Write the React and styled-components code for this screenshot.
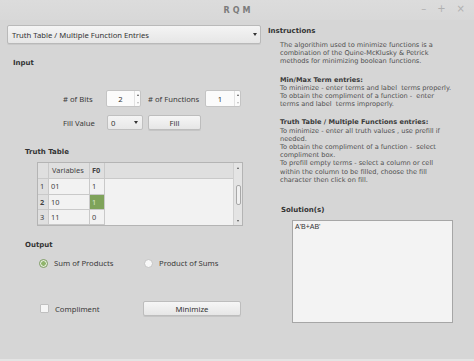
import React from "react";
import styled, { createGlobalStyle } from "styled-components";

const Global = createGlobalStyle`
  html, body { margin: 0; padding: 0; background: #d6d6d6; }
  body { font-family: "Noto Sans", "Open Sans", sans-serif; }
  * { box-sizing: border-box; }
`;

const Window = styled.div`
  width: 474px;
  height: 361px;
  background: #d6d6d6;
  display: flex;
  flex-direction: column;
  border-bottom: 2px solid #e4e4e4;
  overflow: hidden;
`;

const TitleBar = styled.div`
  height: 20px;
  display: grid;
  grid-template-columns: 1fr auto 1fr;
  align-items: center;
  background: linear-gradient(#dcdcdc, #d8d8d8);
`;

const Title = styled.div`
  font-family: "DejaVu Sans", sans-serif;
  font-size: 8px;
  font-weight: bold;
  color: #7c7c7c;
  letter-spacing: 3px;
  padding-left: 3px;
  margin-top: 1px;
`;

const Controls = styled.div`
  display: flex;
  justify-content: flex-end;
  gap: 11px;
  padding-right: 9px;
  color: #b0b0b0;
  font-family: "DejaVu Sans", sans-serif;
  font-size: 10px;
  margin-top: -3px;
`;

const Body = styled.div`
  flex: 1;
  display: flex;
`;

const LeftPane = styled.div`
  width: 263px;
  display: flex;
  flex-direction: column;
  padding: 5px 0 0 7px;
`;

const RightPane = styled.div`
  flex: 1;
  display: flex;
  flex-direction: column;
  padding: 6px 0 0 5px;
`;

const Dropdown = styled.div`
  width: 254px;
  height: 19px;
  border: 1px solid #b9b9b9;
  border-radius: 2px;
  background: linear-gradient(#f4f4f4, #e6e6e6);
  display: flex;
  align-items: center;
  justify-content: space-between;
  padding: 0 3px 0 4px;
  font-size: 7.7px;
  color: #333;
  box-shadow: 0 1px 0 rgba(0,0,0,0.06);
`;

const Caret = styled.span`
  width: 0;
  height: 0;
  border-left: 2.5px solid transparent;
  border-right: 2.5px solid transparent;
  border-top: 3px solid #333;
`;

const SectionLabel = styled.div`
  font-family: "DejaVu Sans", sans-serif;
  font-weight: bold;
  font-size: 7px;
  line-height: 10px;
  color: #333;
  margin-top: ${p => p.$mt}px;
  margin-left: ${p => p.$ml}px;
`;

const FormRow = styled.div`
  display: flex;
  align-items: center;
  margin-top: ${p => p.$mt}px;
  margin-left: 56px;
  height: ${p => p.$h}px;
`;

const FieldLabel = styled.span`
  font-size: 7.7px;
  color: #3a3a3a;
  width: ${p => p.$w}px;
  padding-left: ${p => p.$pl || 0}px;
  flex: none;
`;

const Spin = styled.div`
  width: ${p => p.$w}px;
  height: 17px;
  border: 1px solid #c4c4c4;
  border-radius: 2px;
  background: #fbfbfb;
  display: flex;
  align-items: stretch;
  flex: none;
`;

const SpinValue = styled.div`
  flex: 1;
  display: flex;
  align-items: center;
  justify-content: center;
  font-size: 7.7px;
  color: #333;
`;

const SpinArrows = styled.div`
  width: 6px;
  border-left: 1px solid #e2e2e2;
  display: flex;
  flex-direction: column;
  align-items: center;
  justify-content: space-between;
  padding: 3px 0 2px;
`;

const Tri = styled.span`
  width: 0;
  height: 0;
  border-left: 1.5px solid transparent;
  border-right: 1.5px solid transparent;
  ${p => p.$up ? "border-bottom: 2px solid #555;" : `border-top: 2px solid ${p.$dark ? "#555" : "#bbb"};`}
`;

const Combo = styled.div`
  width: 36px;
  height: 15px;
  border: 1px solid #c0c0c0;
  border-radius: 2px;
  background: linear-gradient(#f4f4f4, #e8e8e8);
  display: flex;
  align-items: center;
  justify-content: space-between;
  padding: 0 4px 0 3px;
  font-size: 7.7px;
  color: #333;
  flex: none;
`;

const Button = styled.div`
  width: ${p => p.$w}px;
  height: ${p => p.$h}px;
  margin-left: ${p => p.$ml}px;
  border: 1px solid #bdbdbd;
  border-radius: 2px;
  background: linear-gradient(#f6f6f6, #e6e6e6);
  display: flex;
  align-items: center;
  justify-content: center;
  font-size: 7.7px;
  color: #333;
  box-shadow: 0 1px 0 rgba(0,0,0,0.08);
  flex: none;
`;

const TableFrame = styled.div`
  margin: 5px 0 0 30px;
  width: 206px;
  height: 64px;
  border: 1px solid #b4b4b4;
  display: flex;
  background: #f1f1f1;
`;

const Grid = styled.div`
  flex: 1;
  display: flex;
  flex-direction: column;
`;

const Row = styled.div`
  display: flex;
  height: ${p => p.$h || 16}px;
  background: ${p => p.$head ? "#dfdfdf" : "#f2f2f2"};
`;

const Cell = styled.div`
  width: ${p => p.$w}px;
  flex: none;
  display: flex;
  align-items: center;
  padding-left: ${p => p.$pl ?? 2}px;
  font-size: 7.4px;
  color: ${p => p.$sel ? "#d9ead0" : "#444"};
  font-weight: ${p => p.$bold ? "bold" : "normal"};
  background: ${p => p.$sel ? "#7fa35a" : p.$gray ? "#dfdfdf" : "transparent"};
  border-right: 1px solid #c9c9c9;
  border-bottom: 1px solid #c9c9c9;
`;

const Filler = styled.div`
  flex: 1;
  border-bottom: ${p => p.$head ? "1px solid #c9c9c9" : "none"};
`;

const ScrollBar = styled.div`
  width: 9px;
  background: #e4e4e4;
  border-left: 1px solid #d0d0d0;
  display: flex;
  flex-direction: column;
  align-items: center;
  justify-content: space-between;
  padding: 4px 0 3px;
`;

const Thumb = styled.div`
  width: 5px;
  height: 20px;
  border: 1px solid #a8a8a8;
  border-radius: 2px;
  background: #f0f0f0;
`;

const RadioRow = styled.div`
  display: flex;
  align-items: center;
  margin: 8px 0 0 32px;
  height: 10px;
`;

const RadioItem = styled.div`
  display: flex;
  align-items: center;
  gap: 6px;
  width: ${p => p.$w}px;
  font-size: 7.7px;
  color: #3a3a3a;
`;

const Radio = styled.span`
  width: 9px;
  height: 9px;
  border-radius: 50%;
  border: 1px solid ${p => p.$on ? "#7d9c62" : "#c4c4c4"};
  background: ${p => p.$on ? "radial-gradient(circle, #8fb46c 0 2px, #e3ecd9 2.5px)" : "#f8f8f8"};
  flex: none;
`;

const CheckRow = styled.div`
  display: flex;
  align-items: center;
  margin: 33px 0 0 33px;
`;

const CheckItem = styled.div`
  display: flex;
  align-items: center;
  gap: 6px;
  width: 103px;
  font-size: 7.7px;
  color: #3a3a3a;
`;

const Check = styled.span`
  width: 9px;
  height: 9px;
  border: 1px solid #c0c0c0;
  border-radius: 1px;
  background: #f6f6f6;
  flex: none;
`;

const Instructions = styled.div`
  margin: 5px 0 0 12px;
  font-family: "DejaVu Sans", sans-serif;
  font-size: 6.6px;
  line-height: 8.2px;
  color: #505050;
`;

const Para = styled.p`
  margin: 0 0 ${p => p.$mb ?? 10}px 0;
`;

const Bold = styled.span`
  font-weight: bold;
  color: #3a3a3a;
`;

const SolutionBox = styled.div`
  margin: 5px 0 0 24px;
  width: 161px;
  height: 103px;
  border: 1px solid #a6a6a6;
  background: #f3f3f3;
  padding: 2px 2px;
  font-family: "Liberation Sans", sans-serif;
  font-size: 7px;
  color: #333;
`;

export default function App() {
  return (
    <>
      <Global />
      <Window>
        <TitleBar>
          <span />
          <Title>RQM</Title>
          <Controls>
            <span>–</span>
            <span>+</span>
            <span>×</span>
          </Controls>
        </TitleBar>
        <Body>
          <LeftPane>
            <Dropdown>
              <span>Truth Table / Multiple Function Entries</span>
              <Caret />
            </Dropdown>
            <SectionLabel $mt={14} $ml={6}>Input</SectionLabel>
            <FormRow $mt={22} $h={17}>
              <FieldLabel $w={43}># of Bits</FieldLabel>
              <Spin $w={35}>
                <SpinValue>2</SpinValue>
                <SpinArrows><Tri $up /><Tri /></SpinArrows>
              </Spin>
              <FieldLabel $w={64} $pl={7}># of Functions</FieldLabel>
              <Spin $w={36}>
                <SpinValue>1</SpinValue>
                <SpinArrows><Tri $up /><Tri /></SpinArrows>
              </Spin>
            </FormRow>
            <FormRow $mt={8} $h={15}>
              <FieldLabel $w={44}>Fill Value</FieldLabel>
              <Combo>
                <span>0</span>
                <Caret />
              </Combo>
              <Button $w={53} $h={15} $ml={5}>Fill</Button>
            </FormRow>
            <SectionLabel $mt={17} $ml={18}>Truth Table</SectionLabel>
            <TableFrame>
              <Grid>
                <Row $head>
                  <Cell $w={11} $gray />
                  <Cell $w={41} $pl={3}>Variables</Cell>
                  <Cell $w={15} $bold>F0</Cell>
                  <Filler $head />
                </Row>
                <Row>
                  <Cell $w={11} $gray $pl={2}>1</Cell>
                  <Cell $w={41}>01</Cell>
                  <Cell $w={15}>1</Cell>
                  <Filler />
                </Row>
                <Row>
                  <Cell $w={11} $gray $bold $pl={2}>2</Cell>
                  <Cell $w={41}>10</Cell>
                  <Cell $w={15} $sel>1</Cell>
                  <Filler />
                </Row>
                <Row $h={15}>
                  <Cell $w={11} $gray $pl={2}>3</Cell>
                  <Cell $w={41}>11</Cell>
                  <Cell $w={15}>0</Cell>
                  <Filler />
                </Row>
              </Grid>
              <ScrollBar>
                <Tri $up />
                <Thumb />
                <Tri $dark />
              </ScrollBar>
            </TableFrame>
            <SectionLabel $mt={14} $ml={18}>Output</SectionLabel>
            <RadioRow>
              <RadioItem $w={105}><Radio $on />Sum of Products</RadioItem>
              <RadioItem $w={90}><Radio />Product of Sums</RadioItem>
            </RadioRow>
            <CheckRow>
              <CheckItem><Check />Compliment</CheckItem>
              <Button $w={98} $h={15} $ml={0}>Minimize</Button>
            </CheckRow>
          </LeftPane>
          <RightPane>
            <SectionLabel $mt={0} $ml={0}>Instructions</SectionLabel>
            <Instructions>
              <Para>
                The algorithim used to minimize functions is a<br />
                combination of the Quine-McKlusky &amp; Petrick<br />
                methods for minimizing boolean functions.
              </Para>
              <Para>
                <Bold>Min/Max Term entries:</Bold><br />
                To minimize - enter terms and label&nbsp; terms properly.<br />
                To obtain the compliment of a function -&nbsp; enter<br />
                terms and label&nbsp; terms improperly.
              </Para>
              <Para $mb={0}>
                <Bold>Truth Table / Multiple Functions entries:</Bold><br />
                To minimize - enter all truth values , use prefill if<br />
                needed.<br />
                To obtain the compliment of a function -&nbsp; select<br />
                compliment box.<br />
                To prefill empty terms - select a column or cell<br />
                within the column to be filled, choose the fill<br />
                character then click on fill.
              </Para>
            </Instructions>
            <SectionLabel $mt={21} $ml={13}>Solution(s)</SectionLabel>
            <SolutionBox>A'B+AB'</SolutionBox>
          </RightPane>
        </Body>
      </Window>
    </>
  );
}
